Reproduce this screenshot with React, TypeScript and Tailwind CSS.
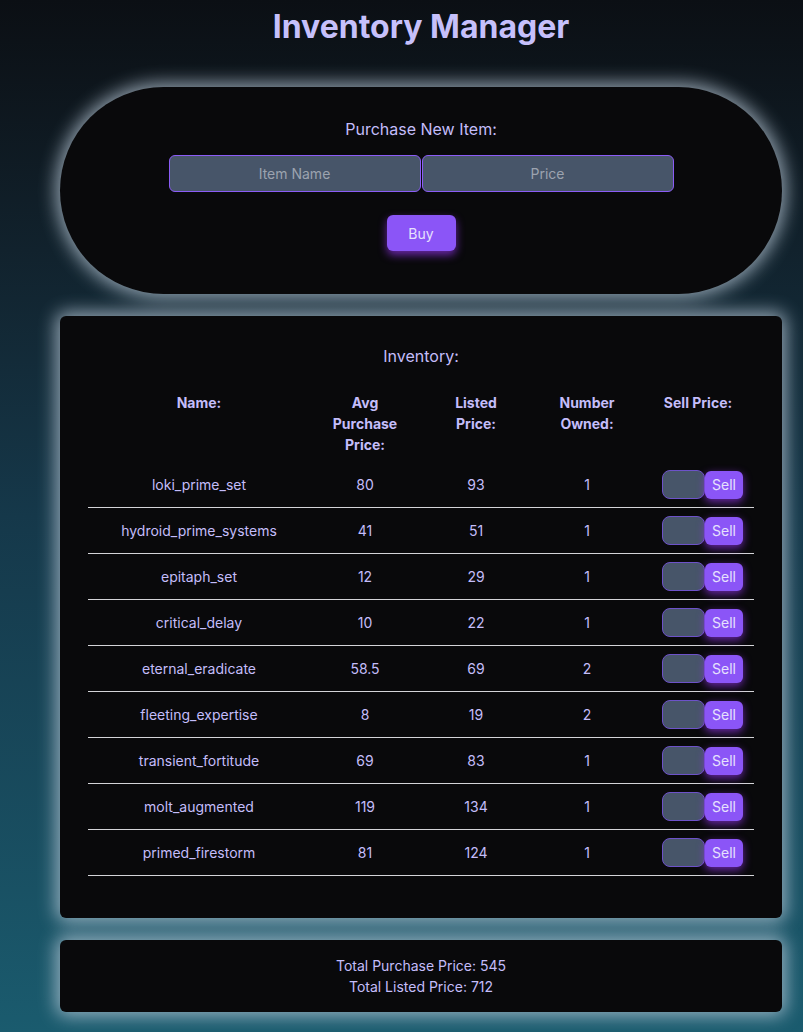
import React from "react";

const items = [
  { name: "loki_prime_set", avg: "80", listed: "93", owned: "1" },
  { name: "hydroid_prime_systems", avg: "41", listed: "51", owned: "1" },
  { name: "epitaph_set", avg: "12", listed: "29", owned: "1" },
  { name: "critical_delay", avg: "10", listed: "22", owned: "1" },
  { name: "eternal_eradicate", avg: "58.5", listed: "69", owned: "2" },
  { name: "fleeting_expertise", avg: "8", listed: "19", owned: "2" },
  { name: "transient_fortitude", avg: "69", listed: "83", owned: "1" },
  { name: "molt_augmented", avg: "119", listed: "134", owned: "1" },
  { name: "primed_firestorm", avg: "81", listed: "124", owned: "1" },
];

const glow = "shadow-[0_0_18px_4px_rgba(190,205,220,0.75)]";

export default function App() {
  return (
    <div
      className="min-h-[1032px] bg-gradient-to-b from-[#0b0f14] via-[#15384a] to-[#1a5b6e] pl-[60px] pr-[21px] text-[#c4bdfa]"
      style={{ fontFamily: "Inter, 'Noto Sans', sans-serif" }}
    >
      {/* Title */}
      <h1 className="pt-[7px] text-center text-[32px] font-bold leading-[40px] text-[#c6c0fb]">
        Inventory Manager
      </h1>

      {/* Purchase */}
      <section className={`mt-[40px] flex h-[207px] flex-col items-center rounded-full bg-[#09090b] pt-[30px] ${glow}`}>
        <p className="text-[16px] leading-6">Purchase New Item:</p>
        <div className="mt-[14px] flex gap-px">
          <input
            placeholder="Item Name"
            className="h-[37px] w-[252px] rounded-md border border-[#8b5cf6] bg-[#475569] text-center text-[14px] text-[#e5e7eb] outline-none placeholder:text-[#9ca3af]"
          />
          <input
            placeholder="Price"
            className="h-[37px] w-[252px] rounded-md border border-[#8b5cf6] bg-[#475569] text-center text-[14px] text-[#e5e7eb] outline-none placeholder:text-[#9ca3af]"
          />
        </div>
        <button className="mt-[23px] h-[36px] w-[69px] rounded-md bg-[#8b55f7] text-[14px] text-[#e6e1fd] shadow-[0_4px_8px_rgba(147,51,234,0.7)]">
          Buy
        </button>
      </section>

      {/* Inventory */}
      <section className={`mt-[22px] rounded-md bg-[#09090b] px-[28px] pb-[42px] pt-[28px] ${glow}`}>
        <p className="text-center text-[16px] leading-6">Inventory:</p>
        <table className="mt-4 w-full table-fixed border-collapse text-[14px] leading-[21px]">
          <thead>
            <tr className="align-top font-bold">
              <th className="w-[222px] px-4 pb-[7px] pt-[8px]">Name:</th>
              <th className="w-[110px] px-4 pb-[7px] pt-[8px]">Avg Purchase Price:</th>
              <th className="w-[112px] px-4 pb-[7px] pt-[8px]">Listed Price:</th>
              <th className="w-[110px] px-4 pb-[7px] pt-[8px]">Number Owned:</th>
              <th className="px-4 pb-[7px] pt-[8px]">Sell Price:</th>
            </tr>
          </thead>
          <tbody>
            {items.map((it) => (
              <tr key={it.name} className="border-b border-[#d4d4d8] text-center">
                <td className="py-2">{it.name}</td>
                <td className="py-2">{it.avg}</td>
                <td className="py-2">{it.listed}</td>
                <td className="py-2">{it.owned}</td>
                <td className="py-2">
                  <div className="flex items-center justify-end pr-[11px]">
                    <input className="h-[29px] w-[43px] rounded-lg border border-[#6d52c9] bg-[#475569] outline-none" />
                    <button className="h-[28px] w-[38px] rounded-md bg-[#8b55f7] text-[14px] text-[#e6e1fd] shadow-[0_3px_8px_rgba(147,51,234,0.7)]">
                      Sell
                    </button>
                  </div>
                </td>
              </tr>
            ))}
          </tbody>
        </table>
      </section>

      {/* Totals */}
      <section className={`mt-[22px] flex h-[72px] flex-col items-center justify-center rounded-md bg-[#09090b] text-[14px] leading-[21px] ${glow}`}>
        <p>Total Purchase Price: 545</p>
        <p>Total Listed Price: 712</p>
      </section>
    </div>
  );
}
